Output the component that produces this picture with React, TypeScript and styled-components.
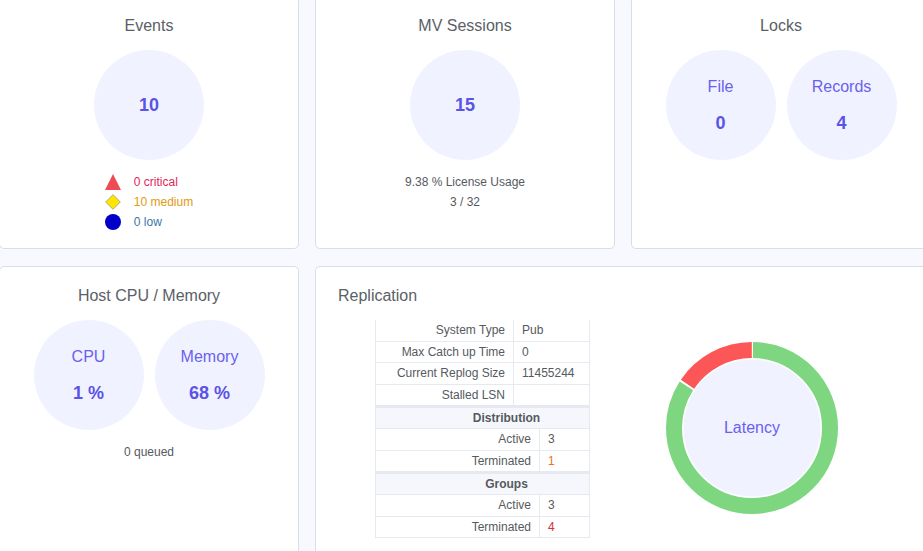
import React from "react";
import styled, { createGlobalStyle } from "styled-components";

const Global = createGlobalStyle`
  html, body { margin: 0; padding: 0; background: #f8f9fe; overflow: hidden; }
  body { font-family: "Liberation Sans", Arial, sans-serif; }
  * { box-sizing: border-box; }
`;

const Grid = styled.div`
  display: grid;
  grid-template-columns: 300px 300px 300px;
  grid-template-rows: 253px 300px;
  column-gap: 16px;
  row-gap: 17px;
  margin: -4px 0 0 -1px;
  width: 960px;
`;

const Card = styled.div<{ $span?: number }>`
  background: #ffffff;
  border: 1px solid #d9dde6;
  border-radius: 5px;
  padding-top: 19px;
  display: flex;
  flex-direction: column;
  align-items: center;
  grid-column: span ${(p) => p.$span ?? 1};
  color: #555a63;
`;

const Title = styled.div<{ $left?: boolean }>`
  font-size: 16px;
  line-height: 20px;
  color: #5b5f66;
  align-self: ${(p) => (p.$left ? "flex-start" : "center")};
  padding-left: ${(p) => (p.$left ? "22px" : "0")};
`;

const CircleRow = styled.div`
  display: flex;
  gap: 11px;
  margin-top: 14px;
`;

const Circle = styled.div`
  width: 110px;
  height: 110px;
  border-radius: 50%;
  background: #f0f3ff;
  display: flex;
  flex-direction: column;
  align-items: center;
  justify-content: center;
  gap: 17px;
`;

const CircleLabel = styled.div`
  font-size: 16px;
  line-height: 18px;
  color: #6b60ee;
`;

const CircleValue = styled.div`
  font-size: 18px;
  line-height: 20px;
  font-weight: bold;
  color: #5b52e6;
`;

const Legend = styled.div`
  margin-top: 12px;
  display: flex;
  flex-direction: column;
`;

const LegendRow = styled.div<{ $color: string }>`
  display: flex;
  align-items: center;
  gap: 13px;
  height: 20px;
  font-size: 12px;
  color: ${(p) => p.$color};
`;

const Note = styled.div<{ $first?: boolean }>`
  font-size: 12px;
  line-height: 20px;
  color: #555a60;
  margin-top: ${(p) => (p.$first ? "12px" : "0")};
`;

const ReplBody = styled.div`
  align-self: stretch;
  display: flex;
  align-items: flex-start;
  margin-top: 14px;
  padding-left: 59px;
  gap: 76px;
`;

const Table = styled.div`
  width: 215px;
  border-left: 1px solid #e6e9f0;
  border-right: 1px solid #e6e9f0;
  font-size: 12px;
  color: #555a60;
`;

const Row = styled.div<{ $cols: string }>`
  display: grid;
  grid-template-columns: ${(p) => p.$cols};
  height: 21.5px;
  border-bottom: 1px solid #e6e9f0;
`;

const Label = styled.div`
  text-align: right;
  padding-right: 8px;
  border-right: 1px solid #e6e9f0;
  display: flex;
  align-items: center;
  justify-content: flex-end;
`;

const Value = styled.div<{ $color?: string }>`
  padding-left: 8px;
  display: flex;
  align-items: center;
  color: ${(p) => p.$color ?? "#555a60"};
`;

const Header = styled.div`
  height: 23px;
  border-top: 2px solid #e6e9f0;
  background: #f5f7fd;
  font-weight: bold;
  display: flex;
  align-items: center;
  justify-content: center;
  padding-left: 48px;
  border-bottom: 1px solid #e6e9f0;
  color: #555a60;
`;

const DonutWrap = styled.div`
  position: relative;
  width: 172px;
  height: 172px;
  margin-top: 22px;
`;

const DonutLabel = styled.div`
  position: absolute;
  inset: 0;
  display: flex;
  align-items: center;
  justify-content: center;
  font-size: 16px;
  color: #6b60ee;
`;

const Triangle = () => (
  <svg width="16" height="16" viewBox="0 0 16 16">
    <polygon points="8,0 16,16 0,16" fill="#ef4b55" />
  </svg>
);
const Diamond = () => (
  <svg width="16" height="16" viewBox="0 0 16 16">
    <polygon points="8,0.7 15.3,8 8,15.3 0.7,8" fill="#ffe600" stroke="#b5a96a" strokeWidth="1" />
  </svg>
);
const Dot = () => (
  <svg width="16" height="16" viewBox="0 0 16 16">
    <circle cx="8" cy="8" r="8" fill="#0000c8" />
  </svg>
);

const Donut = () => {
  const r = 78;
  const c = 2 * Math.PI * r;
  const redFrac = 57 / 360;
  const greenLen = c * (1 - redFrac) - 2;
  const redLen = c * redFrac - 2;
  return (
    <svg width="172" height="172" viewBox="0 0 172 172">
      <g transform="rotate(-90 86 86)">
        <circle
          cx="86"
          cy="86"
          r={r}
          fill="none"
          stroke="#7ed680"
          strokeWidth="16"
          strokeDasharray={`${greenLen} ${c}`}
          strokeDashoffset={-1}
        />
        <circle
          cx="86"
          cy="86"
          r={r}
          fill="none"
          stroke="#fc5656"
          strokeWidth="16"
          strokeDasharray={`${redLen} ${c}`}
          strokeDashoffset={-(c * (1 - redFrac) + 1)}
        />
      </g>
      <circle cx="86" cy="86" r="68.5" fill="#f0f3ff" />
    </svg>
  );
};

export default function App() {
  const c1 = "138px 1fr";
  const c2 = "164px 1fr";
  return (
    <>
      <Global />
      <Grid>
        <Card>
          <Title>Events</Title>
          <CircleRow>
            <Circle>
              <CircleValue>10</CircleValue>
            </Circle>
          </CircleRow>
          <Legend>
            <LegendRow $color="#e2255c">
              <Triangle />
              <span>0 critical</span>
            </LegendRow>
            <LegendRow $color="#e09a12">
              <Diamond />
              <span>10 medium</span>
            </LegendRow>
            <LegendRow $color="#3a76a8">
              <Dot />
              <span>0 low</span>
            </LegendRow>
          </Legend>
        </Card>
        <Card>
          <Title>MV Sessions</Title>
          <CircleRow>
            <Circle>
              <CircleValue>15</CircleValue>
            </Circle>
          </CircleRow>
          <Note $first>9.38 % License Usage</Note>
          <Note>3 / 32</Note>
        </Card>
        <Card>
          <Title>Locks</Title>
          <CircleRow>
            <Circle>
              <CircleLabel>File</CircleLabel>
              <CircleValue>0</CircleValue>
            </Circle>
            <Circle>
              <CircleLabel>Records</CircleLabel>
              <CircleValue>4</CircleValue>
            </Circle>
          </CircleRow>
        </Card>
        <Card>
          <Title>Host CPU / Memory</Title>
          <CircleRow>
            <Circle>
              <CircleLabel>CPU</CircleLabel>
              <CircleValue>1 %</CircleValue>
            </Circle>
            <Circle>
              <CircleLabel>Memory</CircleLabel>
              <CircleValue>68 %</CircleValue>
            </Circle>
          </CircleRow>
          <Note $first>0 queued</Note>
        </Card>
        <Card $span={2}>
          <Title $left>Replication</Title>
          <ReplBody>
            <Table>
              <Row $cols={c1}>
                <Label>System Type</Label>
                <Value>Pub</Value>
              </Row>
              <Row $cols={c1}>
                <Label>Max Catch up Time</Label>
                <Value>0</Value>
              </Row>
              <Row $cols={c1}>
                <Label>Current Replog Size</Label>
                <Value>11455244</Value>
              </Row>
              <Row $cols={c1}>
                <Label>Stalled LSN</Label>
                <Value></Value>
              </Row>
              <Header>Distribution</Header>
              <Row $cols={c2}>
                <Label>Active</Label>
                <Value>3</Value>
              </Row>
              <Row $cols={c2}>
                <Label>Terminated</Label>
                <Value $color="#f0701e">1</Value>
              </Row>
              <Header>Groups</Header>
              <Row $cols={c2}>
                <Label>Active</Label>
                <Value>3</Value>
              </Row>
              <Row $cols={c2}>
                <Label>Terminated</Label>
                <Value $color="#e02a36">4</Value>
              </Row>
            </Table>
            <DonutWrap>
              <Donut />
              <DonutLabel>Latency</DonutLabel>
            </DonutWrap>
          </ReplBody>
        </Card>
      </Grid>
    </>
  );
}
